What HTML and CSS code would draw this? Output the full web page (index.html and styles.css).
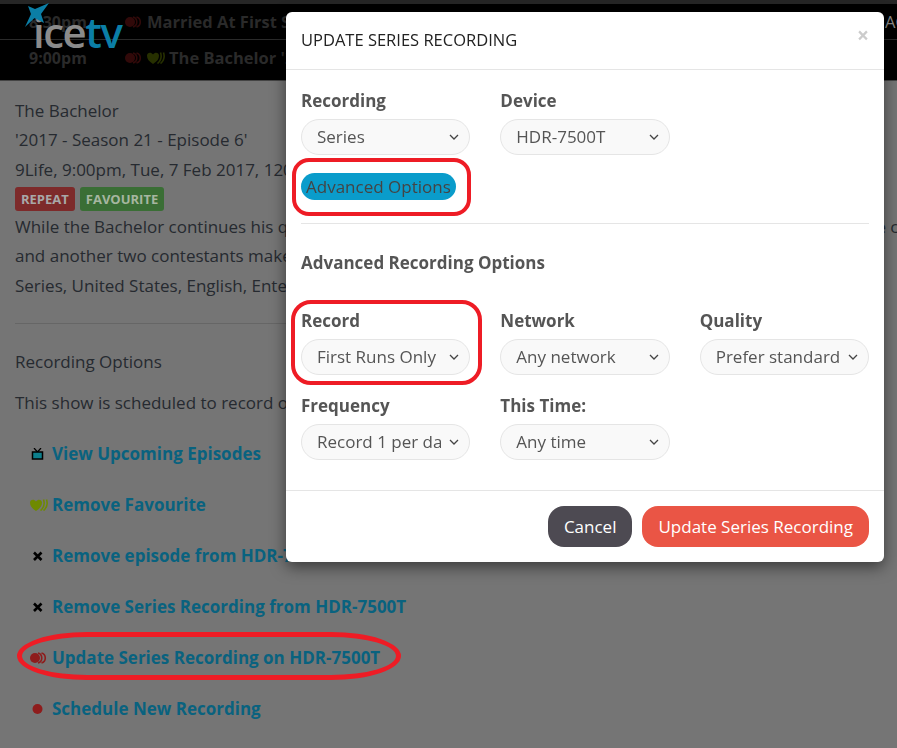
FILE: index.html
```html
<!DOCTYPE html>
<html lang="en">
<head>
    <meta charset="UTF-8">
    <meta name="viewport" content="width=device-width, initial-scale=1.0">
    <title>IceTV Guide</title>
    <link rel="stylesheet" href="styles.css">
</head>
<body>
    <!-- Guide strip behind the dialog -->
    <header class="guide">
        <div class="guide-row guide-row-first">
            <span class="guide-time">8:30pm</span>
            <svg class="guide-icon" width="18" height="12" viewBox="0 0 18 12"><use href="#icon-record"/></svg>
            <span class="guide-title">Married At First Sight</span>
            <span class="guide-more">ACTION</span>
        </div>
        <div class="guide-row">
            <span class="guide-time">9:00pm</span>
            <svg class="guide-icon" width="18" height="12" viewBox="0 0 18 12"><use href="#icon-record"/></svg>
            <svg class="guide-icon" width="18" height="12" viewBox="0 0 18 12"><use href="#icon-heart"/></svg>
            <span class="guide-title">The Bachelor '2017 - Season 21</span>
        </div>
    </header>

    <div class="logo">
        <svg class="logo-star" width="25" height="25" viewBox="0 0 25 25"><path d="M3 3 L10 6 L24 0 L16 11 L19 20 L9.500 15 L0 24 L6 11 Z"/></svg>
        <span class="logo-ice">ice</span><span class="logo-tv">tv</span>
    </div>

    <main class="show">
        <div class="show-line">The Bachelor</div>
        <div class="show-line">'2017 - Season 21 - Episode 6'</div>
        <div class="show-line">9Life, 9:00pm, Tue, 7 Feb 2017, 120 mins</div>
        <div class="badges">
            <span class="badge badge-repeat">REPEAT</span>
            <span class="badge badge-favourite">FAVOURITE</span>
        </div>
        <div class="show-line">While the Bachelor continues his quest to find his one and only real love, the remaining ladies travel out to the c</div>
        <div class="show-line">and another two contestants make their way home.</div>
        <div class="show-line show-line-last">Series, United States, English, Entertainment</div>
        <hr class="show-rule">
        <div class="show-line">Recording Options</div>
        <div class="show-line show-note">This show is scheduled to record on HDR-7500T.</div>

        <ul class="actions">
            <li><svg class="action-icon" width="17" height="12" viewBox="0 0 17 12"><path d="M3.500 0 L7 4 L10.500 0" fill="none" stroke="#000" stroke-width="1.200"/><rect x="2" y="4" width="10" height="7" fill="#0d7f8c" stroke="#000" stroke-width="1.500"/></svg><a href="#">View Upcoming Episodes</a></li>
            <li><svg class="action-icon" width="18" height="12" viewBox="0 0 18 12"><use href="#icon-heart"/></svg><a href="#">Remove Favourite</a></li>
            <li><svg class="action-icon" width="17" height="12" viewBox="0 0 17 12"><use href="#icon-cross"/></svg><a href="#">Remove episode from HDR-7500T</a></li>
            <li><svg class="action-icon" width="17" height="12" viewBox="0 0 17 12"><use href="#icon-cross"/></svg><a href="#">Remove Series Recording from HDR-7500T</a></li>
            <li><svg class="action-icon" width="18" height="12" viewBox="0 0 18 12"><use href="#icon-record"/></svg><a href="#">Update Series Recording on HDR-7500T</a></li>
            <li><svg class="action-icon" width="17" height="12" viewBox="0 0 17 12"><circle cx="7" cy="6" r="5" fill="#8e1c1c"/></svg><a href="#">Schedule New Recording</a></li>
        </ul>
    </main>

    <!-- Update dialog -->
    <div class="dialog">
        <div class="dialog-head">
            <h2>UPDATE SERIES RECORDING</h2>
            <span class="dialog-close">&times;</span>
        </div>
        <div class="dialog-body">
            <div class="field-grid">
                <label class="field">Recording
                    <select><option>Series</option></select>
                </label>
                <label class="field">Device
                    <select><option>HDR-7500T</option></select>
                </label>
            </div>
            <button class="advanced-button">Advanced Options</button>
            <hr class="dialog-rule">
            <h3>Advanced Recording Options</h3>
            <div class="field-grid">
                <label class="field">Record
                    <select><option>First Runs Only</option></select>
                </label>
                <label class="field">Network
                    <select><option>Any network</option></select>
                </label>
                <label class="field">Quality
                    <select><option>Prefer standard</option></select>
                </label>
                <label class="field">Frequency
                    <select><option>Record 1 per day</option></select>
                </label>
                <label class="field">This Time:
                    <select><option>Any time</option></select>
                </label>
            </div>
        </div>
        <div class="dialog-foot">
            <button class="dialog-button dialog-button-cancel">Cancel</button>
            <button class="dialog-button dialog-button-ok">Update Series Recording</button>
        </div>
    </div>

    <!-- Red hand-drawn style markers over the page -->
    <div class="marker marker-advanced"></div>
    <div class="marker marker-record"></div>
    <div class="marker marker-update"></div>

    <svg class="icon-defs" width="0" height="0">
        <defs>
            <g id="icon-record">
                <circle cx="5" cy="6" r="5" fill="#8e1c1c"/>
                <path d="M8 1 A5.200 5.200 0 0 1 8 11 M11.500 1 A5.200 5.200 0 0 1 11.500 11" fill="none" stroke="#8e1c1c" stroke-width="1.600"/>
            </g>
            <g id="icon-heart">
                <path d="M6 12 C2 9.500 0 7 0 3.500 C0 0.500 4 -0.500 6 2.500 C8 -0.500 12 0.500 12 3.500 C12 7 10 9.500 6 12 Z" fill="#6f8a00"/>
                <path d="M10.500 11.500 C13.500 9 15 5 13.500 0.500 M13.500 11.500 C16.500 9 18 5 16.500 0.500" fill="none" stroke="#6f8a00" stroke-width="1.600"/>
            </g>
            <g id="icon-cross">
                <path d="M3.500 2.500 L11 10 M11 2.500 L3.500 10" fill="none" stroke="#000" stroke-width="2.600"/>
            </g>
        </defs>
    </svg>
</body>
</html>
```

FILE: styles.css
```css
* {
    box-sizing: border-box;
}
body {
    font-family: "Open Sans", sans-serif;
    font-size: 17px;
    background-color: #757575;
    color: #262a30;
    margin: 0;
    height: 748px;
    overflow: hidden;
}

/* Guide strip */
.guide {
    background-color: #000;
    border-top: 4px solid #262626;
    border-bottom: 1px solid #444;
    height: 81px;
}
.guide-row {
    display: flex;
    align-items: center;
    height: 35px;
    padding-left: 29px;
    font-size: 16.500px;
    font-weight: 700;
    color: #2a2a2a;
    white-space: nowrap;
}
.guide-row-first {
    height: 36px;
    border-bottom: 1px solid #2a2a2a;
}
.guide-time {
    width: 96px;
    font-size: 16px;
}
.guide-icon {
    margin-right: 4px;
    opacity: 0.35;
}
.guide-title {
    flex: none;
}
.guide-more {
    margin-left: auto;
    width: 12px;
    overflow: hidden;
    font-weight: 400;
    color: #8a8a8a;
}

/* Logo sits over the guide */
.logo {
    position: absolute;
    left: 33px;
    top: 3px;
    font-size: 42px;
    line-height: 1;
    font-weight: 600;
    letter-spacing: -1.500px;
    padding-top: 8px;
    white-space: nowrap;
}
.logo-star {
    position: absolute;
    left: -8px;
    top: 0;
    fill: #0b7ea6;
}
.logo-ice {
    color: #8b8b8b;
}
.logo-tv {
    color: #0b7ea6;
}

/* Show details */
.show {
    padding: 15px 15px 0;
}
.show-line {
    line-height: 29.250px;
    white-space: nowrap;
}
.show-line-last {
    padding-top: 1px;
}
.badges {
    display: flex;
    gap: 5px;
    margin: 3px 0 1px;
}
.badge {
    height: 24px;
    line-height: 24px;
    padding: 0 6px;
    font-size: 13px;
    font-weight: 700;
    border-radius: 3px;
    color: #a8a8a8;
}
.badge-repeat {
    background-color: #7d2a2a;
}
.badge-favourite {
    background-color: #3a6e35;
    color: #a6b6a0;
}
.show-rule {
    border: none;
    border-top: 1px solid #666;
    margin: 22px 0 23px;
}
.show-note {
    margin-top: 12px;
}
.actions {
    list-style: none;
    margin: 11px 0 0;
    padding: 0;
}
.actions li {
    display: flex;
    align-items: center;
    height: 51px;
    padding-left: 15px;
}
.action-icon {
    flex: none;
    width: 18px;
    margin-right: 4px;
}
.actions a {
    color: #09627f;
    font-weight: 700;
    text-decoration: none;
    white-space: nowrap;
}

/* Dialog */
.dialog {
    position: fixed;
    left: 286px;
    top: 12px;
    width: 598px;
    background: #fff;
    border-radius: 6px;
    box-shadow: 0 5px 15px rgba(0,0,0,0.5);
    color: #555;
}
.dialog-head {
    display: flex;
    justify-content: space-between;
    height: 58px;
    padding: 16px 15px 0;
    border-bottom: 1px solid #e5e5e5;
}
.dialog-head h2 {
    margin: 0;
    font-size: 16.500px;
    line-height: 24px;
    font-weight: 500;
    color: #222;
}
.dialog-close {
    font-size: 21px;
    font-weight: 700;
    line-height: 14px;
    color: #ccc;
}
.dialog-body {
    padding: 20px 15px 30px;
}
.dialog-body h3 {
    margin: 27px 0 35px;
    font-size: 17px;
    line-height: 24px;
    font-weight: 700;
    color: #555;
}
.field-grid {
    display: grid;
    grid-template-columns: repeat(3, 1fr);
    column-gap: 30px;
    row-gap: 20px;
}
.field {
    display: flex;
    flex-direction: column;
    gap: 7px;
    font-weight: 700;
    line-height: 22px;
}
.field select {
    appearance: none;
    width: 100%;
    height: 36px;
    padding: 0 28px 2px 15px;
    font-family: inherit;
    font-size: 17px;
    color: #555;
    background-color: #f9f9f9;
    background-image: url("data:image/svg+xml,%3Csvg xmlns='http://www.w3.org/2000/svg' width='10' height='6'%3E%3Cpath d='M1 1 L5 5 L9 1' fill='none' stroke='%23444' stroke-width='1.300'/%3E%3C/svg%3E");
    background-repeat: no-repeat;
    background-position: right 10px center;
    border: 1px solid #e5e5e5;
    border-radius: 18px;
}
.advanced-button {
    display: block;
    height: 27px;
    margin-top: 18px;
    padding: 0 5px;
    font-family: inherit;
    font-size: 17px;
    color: #444;
    background-color: #0a9ccb;
    border: none;
    border-radius: 14px;
}
.dialog-rule {
    border: none;
    border-top: 1px solid #e5e5e5;
    margin: 23px 0 0;
}
.dialog-foot {
    display: flex;
    justify-content: flex-end;
    gap: 10px;
    padding: 15px;
    border-top: 1px solid #e5e5e5;
}
.dialog-button {
    height: 41px;
    padding: 0 16px;
    font-family: inherit;
    font-size: 17px;
    font-weight: 500;
    color: #fff;
    border: none;
    border-radius: 16px;
}
.dialog-button-cancel {
    background-color: #4d4a52;
}
.dialog-button-ok {
    background-color: #ea5545;
}

/* Red markers */
.marker {
    position: absolute;
    border: 4px solid #ee1c25;
}
.marker-advanced {
    left: 292px;
    top: 158px;
    width: 179px;
    height: 58px;
    border-radius: 17px;
}
.marker-record {
    left: 291px;
    top: 300px;
    width: 191px;
    height: 85px;
    border-radius: 20px;
}
.marker-update {
    left: 17px;
    top: 632px;
    width: 384px;
    height: 48px;
    border-width: 5px;
    border-radius: 70px / 24px;
}
.icon-defs {
    position: absolute;
}
```
